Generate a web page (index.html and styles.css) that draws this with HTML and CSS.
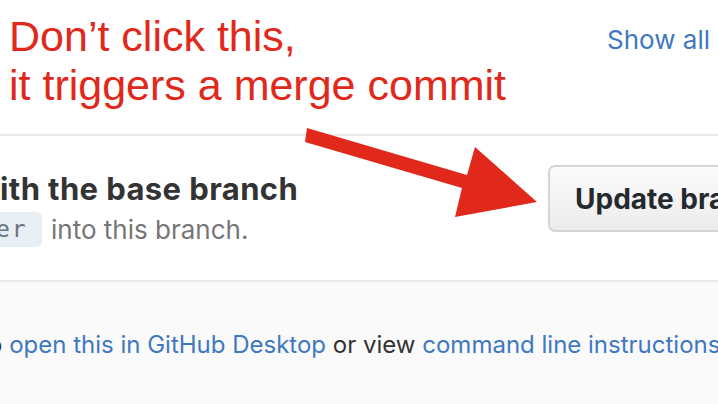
FILE: index.html
```html
<!DOCTYPE html>
<html lang="en">
<head>
<meta charset="utf-8">
<title>Update branch</title>
<link rel="stylesheet" href="styles.css">
</head>
<body>
<div class="page">
  <section class="top">
    <p class="note">Don’t click this,<br>it triggers a merge commit</p>
    <a class="show-all" href="#">Show all</a>
  </section>
  <section class="merge">
    <div class="merge-text">
      <h3 class="merge-title">ith the base branch</h3>
      <p class="merge-sub"><code class="branch">er</code> into this branch.</p>
    </div>
    <button class="btn" type="button">Update branch</button>
  </section>
  <section class="footer">
    <p class="hint">o <a href="#">open this in GitHub Desktop</a> or view <a href="#">command line instructions</a>.</p>
  </section>
  <svg class="arrow" width="718" height="404" viewBox="0 0 718 404" aria-hidden="true">
    <polygon points="307,128 467,175 475,147 537,202 455,217 462,188 305,142" fill="#e0281b"/>
  </svg>
</div>
</body>
</html>
```

FILE: styles.css
```css
* { box-sizing: border-box; }
html, body {
  margin: 0;
  padding: 0;
  background: #ffffff;
}
body {
  width: 718px;
  height: 404px;
  overflow: hidden;
  font-family: Inter, "Noto Sans", sans-serif;
}
.page {
  position: relative;
  width: 718px;
  height: 404px;
  display: flex;
  flex-direction: column;
}
.top {
  height: 136px;
  flex: none;
  border-bottom: 2px solid #e9e9e9;
  display: flex;
  justify-content: space-between;
  align-items: flex-start;
}
.note {
  margin: 12px 0 0 9px;
  font-family: "Liberation Sans", Arial, sans-serif;
  font-size: 43px;
  line-height: 49px;
  color: #e0281b;
}
.show-all {
  margin: 23px 8px 0 0;
  font-size: 26px;
  line-height: 34px;
  color: #4078c0;
  text-decoration: none;
}
.merge {
  height: 146px;
  flex: none;
  border-bottom: 2px solid #e9e9e9;
  display: flex;
  justify-content: space-between;
  align-items: flex-start;
}
.merge-text {
  padding-top: 34px;
}
.merge-title {
  margin: 0;
  font-size: 31px;
  line-height: 38px;
  font-weight: 700;
  letter-spacing: 0.4px;
  color: #333333;
  white-space: nowrap;
}
.merge-sub {
  margin: 4px 0 0;
  font-size: 26px;
  line-height: 35px;
  color: #767676;
  white-space: nowrap;
}
.branch {
  display: inline-block;
  vertical-align: top;
  padding: 0 14px 0 0;
  margin-left: -4px;
  margin-right: 2px;
  font-family: "DejaVu Sans Mono", monospace;
  font-size: 23px;
  line-height: 35px;
  color: #6a737d;
  background: #e7eef4;
  border-radius: 6px;
  letter-spacing: 2px;
}
.btn {
  margin-top: 29px;
  margin-right: -60px;
  width: 230px;
  height: 67px;
  flex: none;
  padding: 0 0 0 25px;
  text-align: left;
  font-family: Inter, "Noto Sans", sans-serif;
  font-size: 28px;
  font-weight: 700;
  color: #24292e;
  white-space: nowrap;
  overflow: hidden;
  background: linear-gradient(#fbfbfb, #ececec);
  border: 2px solid #d5d5d5;
  border-radius: 7px;
}
.footer {
  flex: 1;
  background: #fafafa;
}
.hint {
  margin: 46px 0 0 -12px;
  font-size: 24px;
  line-height: 34px;
  color: #333333;
  white-space: nowrap;
}
.hint a {
  color: #4078c0;
  text-decoration: none;
}
.arrow {
  position: absolute;
  left: 0;
  top: 0;
  pointer-events: none;
}
```
